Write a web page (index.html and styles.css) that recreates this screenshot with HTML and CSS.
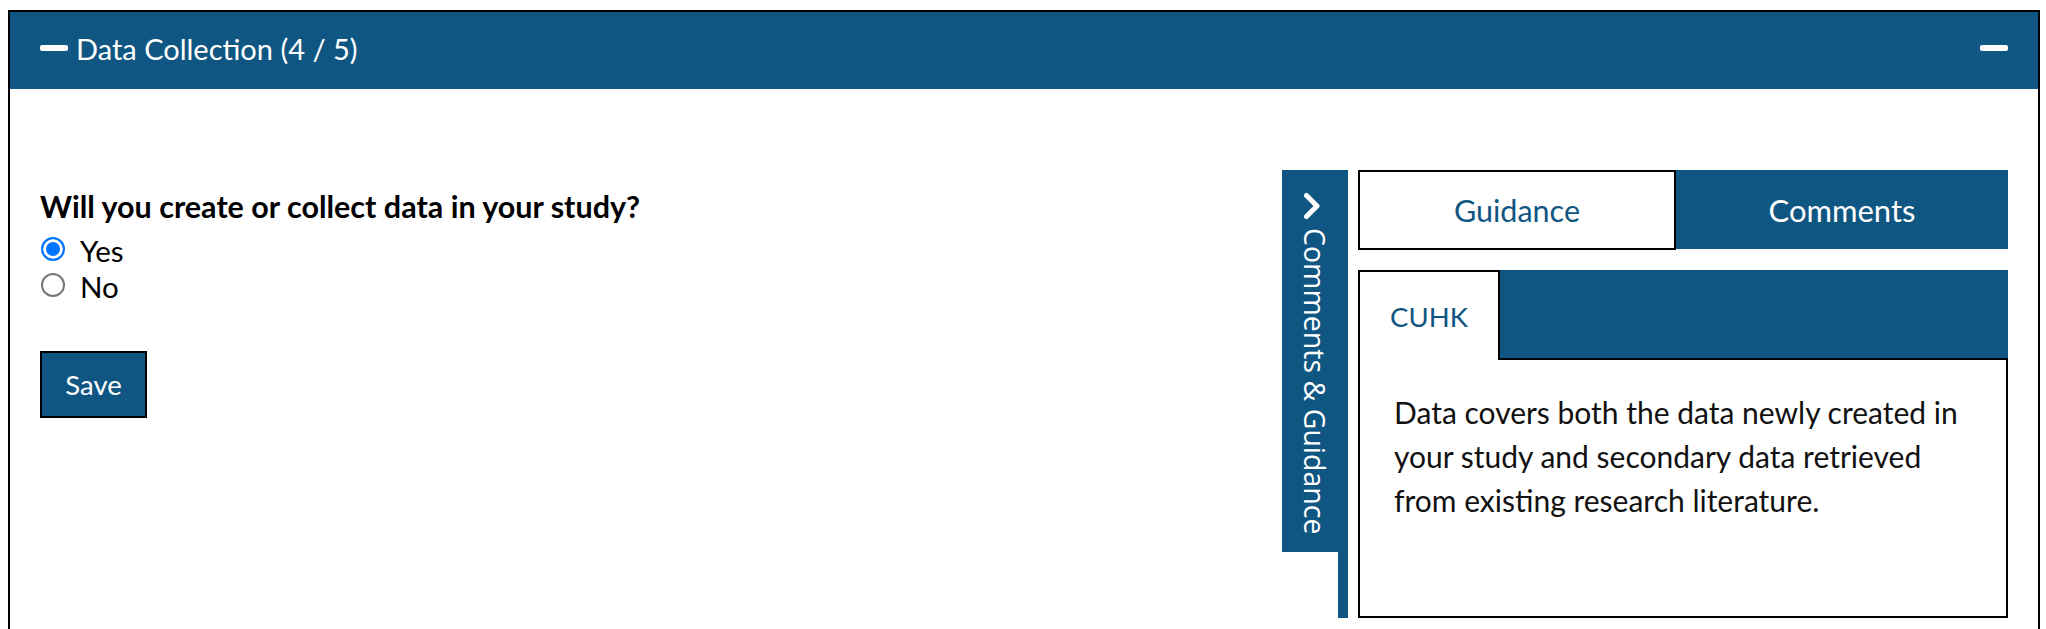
FILE: index.html
```html
<!DOCTYPE html>
<html lang="en">
<head>
<meta charset="utf-8">
<title>Data Collection</title>
<link rel="stylesheet" href="styles.css">
</head>
<body>
<div class="panel">
  <div class="panel-heading">
    <div class="heading-title">
      <span class="minus"></span>
      <span class="title-text">Data Collection (4 / 5)</span>
    </div>
    <span class="minus"></span>
  </div>
  <div class="panel-body">
    <form class="question">
      <div class="q-label">Will you create or collect data in your study?</div>
      <label class="option"><input class="radio" type="radio" name="q" checked><span>Yes</span></label>
      <label class="option"><input class="radio" type="radio" name="q"><span>No</span></label>
      <button type="button" class="save">Save</button>
    </form>
    <div class="guidance-area">
      <div class="sidebar">
        <div class="side-tab">
          <svg class="chevron" width="18" height="28" viewBox="0 0 18 28"><polyline points="3.5,3.5 14,14 3.5,24.5" fill="none" stroke="#fff" stroke-width="5" stroke-linecap="round" stroke-linejoin="round"/></svg>
          <span class="side-text">Comments &amp; Guidance</span>
        </div>
        <div class="side-strip"></div>
      </div>
      <div class="panels">
        <div class="tabs">
          <div class="tab tab-active">Guidance</div>
          <div class="tab tab-other">Comments</div>
        </div>
        <div class="g-panel">
          <div class="g-head">
            <div class="g-tab">CUHK</div>
            <div class="g-fill"></div>
          </div>
          <div class="g-content">Data covers both the data newly created in your study and secondary data retrieved from existing research literature.</div>
        </div>
      </div>
    </div>
  </div>
</div>
</body>
</html>
```
FILE: styles.css
```css
html, body {
  margin: 0;
  padding: 0;
  background: #fff;
}
body {
  font-family: "Lato", "Liberation Sans", sans-serif;
  font-size: 30px;
  color: #000;
}
.panel {
  margin: 10px 6px 0 8px;
  border: 2px solid #000;
  border-bottom: none;
}
.panel-heading {
  height: 77px;
  box-sizing: border-box;
  background: #105682;
  color: #fff;
  display: flex;
  align-items: center;
  justify-content: space-between;
  padding: 0 30px 5px 30px;
}
.heading-title {
  display: flex;
  align-items: center;
}
.minus {
  display: block;
  width: 28px;
  height: 6px;
  background: #fff;
  border-radius: 2px;
}
.title-text {
  font-size: 29px;
  line-height: 36px;
  margin-left: 8px;
  position: relative;
  top: 1px;
}
.panel-body {
  display: flex;
  justify-content: space-between;
  padding: 0 30px 40px 30px;
}
.question {
  padding-top: 101px;
  display: flex;
  flex-direction: column;
  align-items: flex-start;
}
.q-label {
  font-weight: bold;
  font-size: 30.5px;
  line-height: 33px;
  margin-bottom: 10px;
}
.option {
  display: flex;
  align-items: center;
  height: 36px;
  line-height: 36px;
  font-size: 29.5px;
}
.radio {
  appearance: none;
  -webkit-appearance: none;
  box-sizing: border-box;
  width: 24px;
  height: 24px;
  margin: 0 15px 0 1px;
  border: 2px solid #767676;
  border-radius: 50%;
  background: #fff;
  position: relative;
  top: -2px;
}
.radio:checked {
  border: 2.5px solid #0075ff;
  background: #0075ff;
  box-shadow: inset 0 0 0 3px #fff;
}
.save {
  margin-top: 46px;
  width: 107px;
  height: 67px;
  box-sizing: border-box;
  border: 2px solid #000;
  background: #105682;
  color: #fff;
  font-family: "Lato", "Liberation Sans", sans-serif;
  font-size: 27.5px;
  padding: 0;
}
.guidance-area {
  display: flex;
  margin-top: 81px;
  gap: 10px;
}
.sidebar {
  width: 66px;
  display: flex;
  flex-direction: column;
  align-items: flex-end;
}
.side-tab {
  width: 66px;
  height: 382px;
  background: #105682;
  color: #fff;
  display: flex;
  flex-direction: column;
  align-items: center;
  padding-top: 22px;
  box-sizing: border-box;
}
.chevron {
  display: block;
  margin-left: -6px;
}
.side-text {
  writing-mode: vertical-rl;
  font-family: "Open Sans", "Noto Sans", sans-serif;
  font-size: 28.5px;
  line-height: 36px;
  margin-top: 8px;
}
.side-strip {
  width: 10px;
  height: 66px;
  background: #105682;
}
.panels {
  width: 650px;
}
.tabs {
  display: flex;
  height: 80px;
}
.tab {
  display: flex;
  align-items: center;
  justify-content: center;
  box-sizing: border-box;
  font-size: 30.5px;
}
.tab-active {
  width: 318px;
  border: 2px solid #000;
  background: #fff;
  color: #105682;
}
.tab-other {
  flex: 1;
  background: #105682;
  color: #fff;
  height: 79px;
  font-size: 31px;
}
.g-panel {
  margin-top: 20px;
}
.g-head {
  display: flex;
  height: 90px;
}
.g-tab {
  width: 142px;
  box-sizing: border-box;
  border: 2px solid #000;
  border-bottom: none;
  background: #fff;
  color: #105682;
  font-size: 27.5px;
  display: flex;
  align-items: center;
  justify-content: center;
}
.g-fill {
  flex: 1;
  background: #105682;
  border-bottom: 2px solid #000;
}
.g-content {
  height: 258px;
  box-sizing: border-box;
  border: 2px solid #000;
  border-top: none;
  padding: 30px 30px 0 34px;
  font-size: 30px;
  line-height: 44px;
  color: #111;
}
```
